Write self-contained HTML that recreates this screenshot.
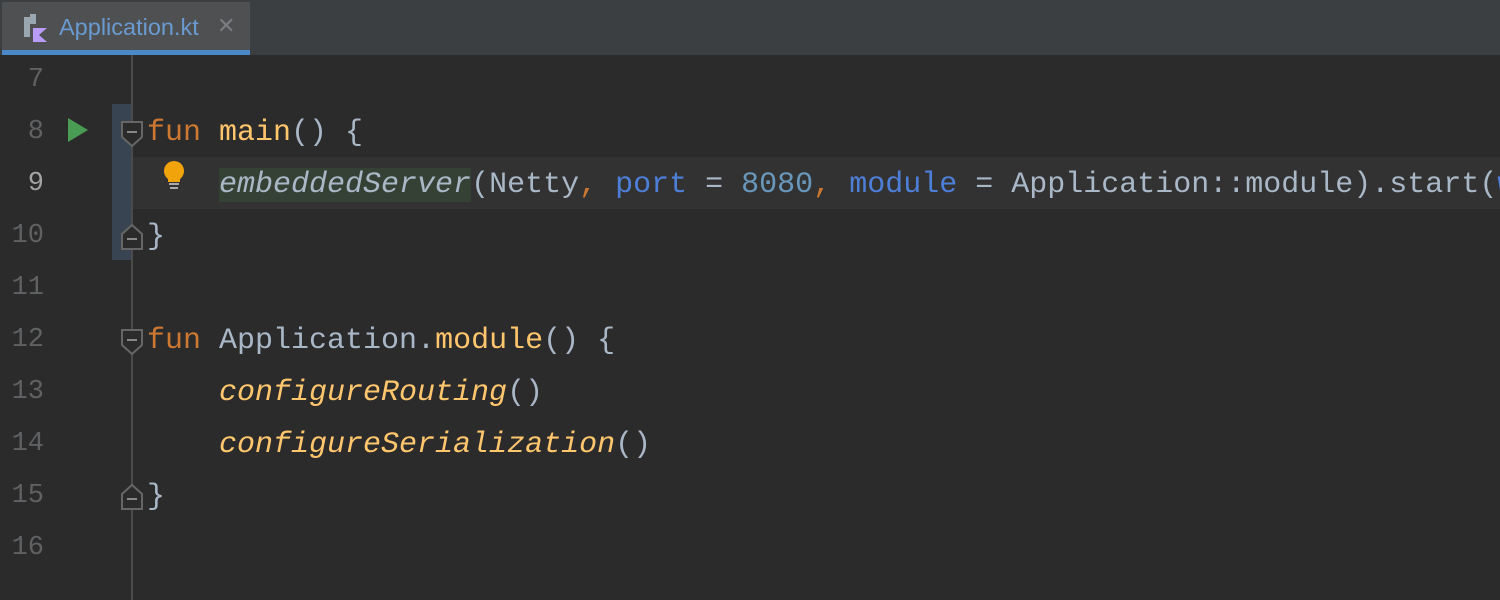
<!DOCTYPE html>
<html><head><style>
body{margin:0;width:1500px;height:600px;background:#2b2b2b;overflow:hidden;position:relative;font-family:"Liberation Mono",monospace}
.bar{position:absolute;left:0;top:0;width:1500px;height:55px;background:#3c3f41}
.tab{position:absolute;left:2px;top:2px;width:248px;height:48px;background:#4e5052}
.ul{position:absolute;left:2px;top:50px;width:248px;height:5px;background:#4a88c7}
.tt{position:absolute;left:59px;top:14px;font:23.5px "Liberation Sans",sans-serif;color:#6a9bd0}
.x{position:absolute;left:217px;top:13px;font:22px "Liberation Sans",sans-serif;color:#7b7d80}
.cur{position:absolute;left:133px;top:157px;width:1367px;height:52px;background:#323232}
.vl{position:absolute;left:131px;top:55px;width:2px;height:545px;background:#4b4b4b}
.bl{position:absolute;left:112px;top:104px;width:19px;height:156px;background:#384452}
.ln{position:absolute;left:0;width:44px;text-align:right;font-size:27px;color:#5f6163}
.c{position:absolute;left:147px;font-size:30px;color:#a9b7c6;white-space:pre;line-height:52px}
.k{color:#cc7832}.f{color:#ffc66d}.i{font-style:italic}.p{color:#4e7fd8}.n{color:#6897bb}
.hl{background:#344134}
</style></head><body>
<div class="bar"></div><div class="tab"></div><div class="ul"></div>
<svg style="position:absolute;left:22px;top:13px" width="28" height="30"><path d="M2 4h6V1h6v10H8v13H2z" fill="#9aa7b0"/><path d="M11 15h14l-8 7 8 7H11z" fill="#b99bf8"/></svg>
<div class="tt">Application.kt</div><div class="x">✕</div>
<div class="cur"></div><div class="bl"></div><div class="vl"></div>
<div class="ln" style="top:65px">7</div>
<div class="ln" style="top:117px">8</div>
<div class="ln" style="top:169px;color:#a4a3a3">9</div>
<div class="ln" style="top:221px">10</div>
<div class="ln" style="top:273px">11</div>
<div class="ln" style="top:325px">12</div>
<div class="ln" style="top:377px">13</div>
<div class="ln" style="top:429px">14</div>
<div class="ln" style="top:481px">15</div>
<div class="ln" style="top:533px">16</div>
<svg style="position:absolute;left:68px;top:118px" width="20" height="24"><path d="M0 0L20 12L0 24z" fill="#499c54"/></svg>
<svg style="position:absolute;left:160px;top:160px" width="30" height="34"><circle cx="14" cy="11" r="10" fill="#f0a30a"/><rect x="8" y="17" width="12" height="5" fill="#f0a30a"/><rect x="9" y="23" width="10" height="2" fill="#aaa"/><rect x="10" y="27" width="8" height="2" fill="#aaa"/></svg>
<svg style="position:absolute;left:120px;top:120px" width="24" height="30"><path d="M2 2h20v15l-10 9-10-9z" fill="#2b2b2b" stroke="#666" stroke-width="2"/><path d="M7 12h10" stroke="#888" stroke-width="2"/></svg>
<svg style="position:absolute;left:120px;top:221px" width="24" height="30"><path d="M2 28h20V13L12 4 2 13z" fill="#2b2b2b" stroke="#666" stroke-width="2"/><path d="M7 18h10" stroke="#888" stroke-width="2"/></svg>
<svg style="position:absolute;left:120px;top:328px" width="24" height="30"><path d="M2 2h20v15l-10 9-10-9z" fill="#2b2b2b" stroke="#666" stroke-width="2"/><path d="M7 12h10" stroke="#888" stroke-width="2"/></svg>
<svg style="position:absolute;left:120px;top:481px" width="24" height="30"><path d="M2 28h20V13L12 4 2 13z" fill="#2b2b2b" stroke="#666" stroke-width="2"/><path d="M7 18h10" stroke="#888" stroke-width="2"/></svg>
<div class="c" style="top:107px"><span class="k">fun</span> <span class="f">main</span>() {</div>
<div class="c" style="top:159px">    <span class="i hl">embeddedServer</span>(Netty<span class="k">,</span> <span class="p">port</span> = <span class="n">8080</span><span class="k">,</span> <span class="p">module</span> = Application::module).start(<span class="p">w</span></div>
<div class="c" style="top:211px">}</div>
<div class="c" style="top:315px"><span class="k">fun</span> Application.<span class="f">module</span>() {</div>
<div class="c" style="top:367px">    <span class="f i">configureRouting</span>()</div>
<div class="c" style="top:419px">    <span class="f i">configureSerialization</span>()</div>
<div class="c" style="top:471px">}</div>
</body></html>
